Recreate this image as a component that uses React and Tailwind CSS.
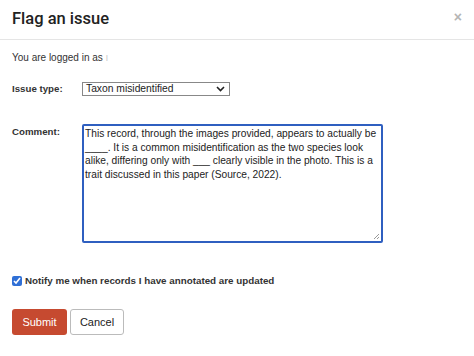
import React from 'react';

const App = () => {
  return (
    <div className="w-[474px] h-[356px] bg-white overflow-hidden text-[#222]" style={{ fontFamily: '"Liberation Sans", Arial, sans-serif' }}>
      <div className="flex items-center justify-between h-[40px] pl-[12px] pr-[12px] border-b border-[#e5e5e5]">
        <h2 className="text-[16.5px] font-medium text-[#222] leading-none" style={{ fontFamily: 'Roboto, "Liberation Sans", sans-serif' }}>Flag an issue</h2>
        <span className="text-[#b5b5b5] text-[14px] font-bold leading-none -mt-[5px]">×</span>
      </div>
      <div className="px-[12px] pt-[10px]">
        <p className="text-[10px] leading-[16px] text-[#333]">You are logged in as <span className="text-[#ccc]">ı</span></p>
        <div className="flex items-center h-[16px] mt-[15px]">
          <label className="w-[70px] text-[9.7px] leading-[16px] font-bold text-[#333]">Issue type:</label>
          <div className="flex items-center justify-between w-[148px] h-[14px] border border-[#888] px-[3px]">
            <span className="text-[10.3px] leading-none text-[#222]">Taxon misidentified</span>
            <svg width="9" height="6" viewBox="0 0 9 6" className="mr-[1px]">
              <path d="M1 1l3.5 3.5L8 1" fill="none" stroke="#222" strokeWidth="1.6" />
            </svg>
          </div>
        </div>
        <div className="flex mt-[27px]">
          <label className="w-[70px] text-[9.7px] leading-[16px] font-bold text-[#333]">Comment:</label>
          <div className="relative w-[301px] h-[119px] border-2 border-[#2f5fc0] rounded-[2px] px-[1px] pt-[1px]">
            <p className="text-[10.2px] leading-[13.5px] text-[#222]">
              This record, through the images provided, appears to actually be ____. It is a common misidentification as the two species look alike, differing only with ___ clearly visible in the photo. This is a trait discussed in this paper (Source, 2022).
            </p>
            <svg width="7" height="7" viewBox="0 0 7 7" className="absolute right-[1px] bottom-[1px]">
              <path d="M6 1L1 6M6 4L4 6" stroke="#999" strokeWidth="1" />
            </svg>
          </div>
        </div>
        <div className="flex items-center h-[16px] mt-[30px]">
          <input type="checkbox" defaultChecked className="w-[10px] h-[10px] m-0 accent-[#2f6fd6]" />
          <span className="ml-[3px] text-[9.8px] leading-[16px] font-bold text-[#333]">Notify me when records I have annotated are updated</span>
        </div>
        <div className="flex gap-[3px] mt-[20px]">
          <button className="w-[55px] h-[26px] bg-[#c64a30] text-white text-[11px] rounded-[3px]">Submit</button>
          <button className="w-[54px] h-[26px] bg-white border border-[#bbb] text-[#222] text-[11px] rounded-[3px]">Cancel</button>
        </div>
      </div>
    </div>
  );
};

export default App;
